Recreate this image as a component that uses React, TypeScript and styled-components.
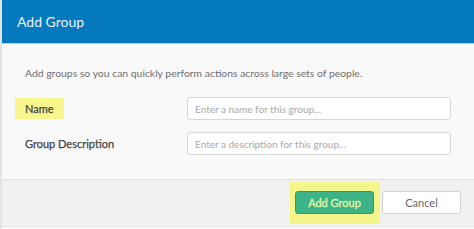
import React from "react";
import styled, { createGlobalStyle } from "styled-components";

const GlobalStyle = createGlobalStyle`
  html, body {
    margin: 0;
    padding: 0;
    background: #f8f8f8;
  }
  * {
    box-sizing: border-box;
  }
`;

const Modal = styled.div`
  width: 474px;
  height: 229px;
  display: flex;
  flex-direction: column;
  border-left: 2px solid #e4e4e4;
  background: #f9f9f9;
  font-family: Lato, "Open Sans", Arial, sans-serif;
  overflow: hidden;
`;

const Header = styled.header`
  height: 44px;
  flex-shrink: 0;
  display: flex;
  align-items: center;
  padding: 0 0 0 15px;
  background: #0479be;
  border-bottom: 1px solid #a9d8f0;
  color: #e9f3fa;
  font-size: 14px;
`;

const Body = styled.div`
  padding: 23px 23px 24px;
  border-bottom: 1px solid #e0e0e0;
`;

const Intro = styled.p`
  margin: 0 0 17px;
  font-size: 10.4px;
  line-height: 13px;
  color: #6e6e6e;
`;

const Row = styled.div`
  display: flex;
  align-items: center;
  height: 23px;
  & + & {
    margin-top: 12px;
  }
`;

const Label = styled.label`
  width: 162px;
  flex-shrink: 0;
  font-size: 11px;
  color: #444;
  -webkit-text-stroke: 0.25px #444;
`;

const Highlight = styled.span`
  display: inline-block;
  background: #f6f68c;
  padding: 4px 10px 4px;
  margin-left: -10px;
`;

const Input = styled.input`
  width: 264px;
  height: 23px;
  border: 1px solid #d6d6d6;
  border-radius: 3px;
  background: #fff;
  padding: 0 7px;
  font-family: inherit;
  font-size: 10px;
  color: #333;
  outline: none;
  &::placeholder {
    color: #a9a9a9;
  }
`;

const Footer = styled.footer`
  height: 47px;
  display: flex;
  align-items: center;
  justify-content: flex-end;
  gap: 2px;
  padding: 0 13px 1px 0;
  background: #f1f1f1;
  border-bottom: 1px solid #e6e6e6;
`;

const ButtonGlow = styled.div`
  padding: 9px 6px 10px 5px;
  background: #f4f58a;
`;

const Button = styled.button<{ $primary?: boolean }>`
  width: 79px;
  height: 23px;
  border-radius: 3px;
  font-family: inherit;
  font-size: 11px;
  cursor: pointer;
  border: 1px solid ${(p) => (p.$primary ? "#2c9a71" : "#d2d2d2")};
  background: ${(p) => (p.$primary ? "#3db487" : "#fff")};
  color: ${(p) => (p.$primary ? "#e3f6a6" : "#666")};
  -webkit-text-stroke: ${(p) => (p.$primary ? "0.3px #e3f6a6" : "0")};
`;

export default function App() {
  return (
    <>
      <GlobalStyle />
      <Modal>
        <Header>Add Group</Header>
        <Body>
          <Intro>Add groups so you can quickly perform actions across large sets of people.</Intro>
          <Row>
            <Label>
              <Highlight>Name</Highlight>
            </Label>
            <Input placeholder="Enter a name for this group..." />
          </Row>
          <Row>
            <Label>Group Description</Label>
            <Input placeholder="Enter a description for this group..." />
          </Row>
        </Body>
        <Footer>
          <ButtonGlow>
            <Button $primary>Add Group</Button>
          </ButtonGlow>
          <Button>Cancel</Button>
        </Footer>
      </Modal>
    </>
  );
}
